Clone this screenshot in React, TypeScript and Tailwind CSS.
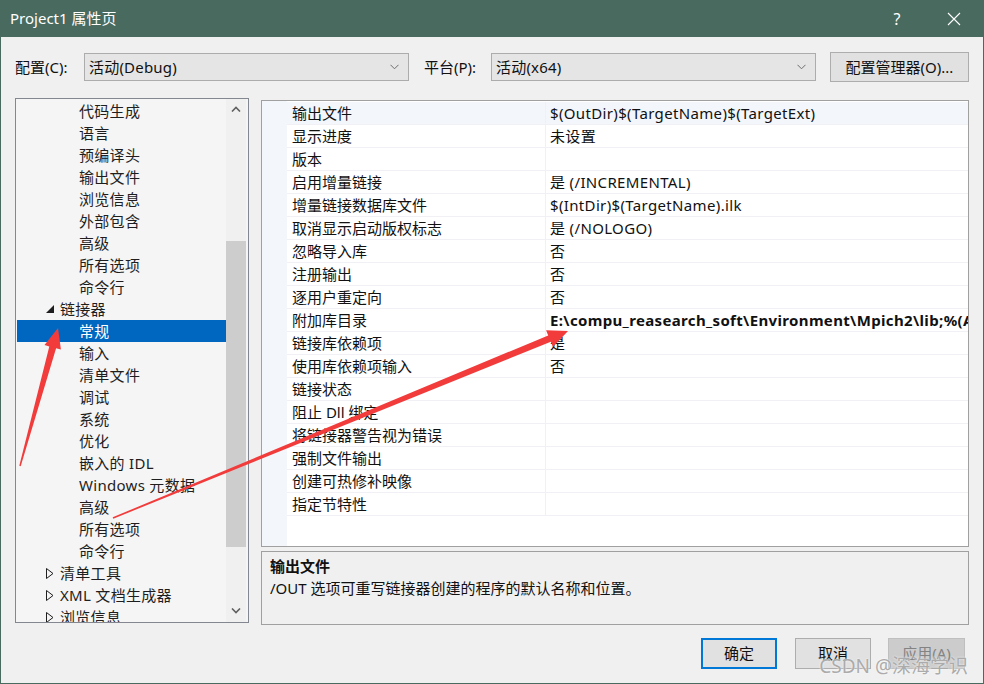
import React from "react";

const FONT = "font-['Noto_Sans','Noto_Sans_CJK_SC',sans-serif]";

type TreeItem = { label: string; level: 0 | 1; state?: "open" | "closed"; selected?: boolean };

const tree: TreeItem[] = [
  { label: "代码生成", level: 1 },
  { label: "语言", level: 1 },
  { label: "预编译头", level: 1 },
  { label: "输出文件", level: 1 },
  { label: "浏览信息", level: 1 },
  { label: "外部包含", level: 1 },
  { label: "高级", level: 1 },
  { label: "所有选项", level: 1 },
  { label: "命令行", level: 1 },
  { label: "链接器", level: 0, state: "open" },
  { label: "常规", level: 1, selected: true },
  { label: "输入", level: 1 },
  { label: "清单文件", level: 1 },
  { label: "调试", level: 1 },
  { label: "系统", level: 1 },
  { label: "优化", level: 1 },
  { label: "嵌入的 IDL", level: 1 },
  { label: "Windows 元数据", level: 1 },
  { label: "高级", level: 1 },
  { label: "所有选项", level: 1 },
  { label: "命令行", level: 1 },
  { label: "清单工具", level: 0, state: "closed" },
  { label: "XML 文档生成器", level: 0, state: "closed" },
  { label: "浏览信息", level: 0, state: "closed" },
];

const props: [string, string, boolean?][] = [
  ["输出文件", "$(OutDir)$(TargetName)$(TargetExt)"],
  ["显示进度", "未设置"],
  ["版本", ""],
  ["启用增量链接", "是 (/INCREMENTAL)"],
  ["增量链接数据库文件", "$(IntDir)$(TargetName).ilk"],
  ["取消显示启动版权标志", "是 (/NOLOGO)"],
  ["忽略导入库", "否"],
  ["注册输出", "否"],
  ["逐用户重定向", "否"],
  ["附加库目录", "E:\\compu_reasearch_soft\\Environment\\Mpich2\\lib;%(AdditionalLibraryDirectories)", true],
  ["链接库依赖项", "是"],
  ["使用库依赖项输入", "否"],
  ["链接状态", ""],
  ["阻止 Dll 绑定", ""],
  ["将链接器警告视为错误", ""],
  ["强制文件输出", ""],
  ["创建可热修补映像", ""],
  ["指定节特性", ""],
];

function arrowPts(
  tx: number, ty: number, px: number, py: number,
  tw: number, sw: number, hl: number, hw: number
) {
  const dx = px - tx, dy = py - ty;
  const len = Math.hypot(dx, dy);
  const ux = dx / len, uy = dy / len;
  const nx = -uy, ny = ux;
  const bx = px - ux * hl, by = py - uy * hl;
  const pts = [
    [tx + (nx * tw) / 2, ty + (ny * tw) / 2],
    [bx + (nx * sw) / 2, by + (ny * sw) / 2],
    [bx + nx * hw, by + ny * hw],
    [px, py],
    [bx - nx * hw, by - ny * hw],
    [bx - (nx * sw) / 2, by - (ny * sw) / 2],
    [tx - (nx * tw) / 2, ty - (ny * tw) / 2],
  ];
  return pts.map((p) => `${p[0].toFixed(1)},${p[1].toFixed(1)}`).join(" ");
}

function Chevron() {
  return (
    <svg width="9" height="6" viewBox="0 0 9 6">
      <path d="M0.5 0.8 L4.5 4.8 L8.5 0.8" fill="none" stroke="#6d6d6d" strokeWidth="1" />
    </svg>
  );
}

function Combo({ text }: { text: string }) {
  return (
    <div className="w-[325px] h-[28px] bg-[#e5e5e5] border border-[#acacac] flex items-center pl-[4px] pr-[9px]">
      <span className="flex-1 text-[15px] text-[#111] tracking-[0.2px]">{text}</span>
      <Chevron />
    </div>
  );
}

export default function App() {
  return (
    <div className={`relative w-[984px] h-[684px] bg-[#f0f0f0] border-x border-b border-[#496a5f] flex flex-col overflow-hidden ${FONT}`}>
      {/* Title bar */}
      <div className="h-[37px] bg-[#496a5f] flex items-center pl-[9px] text-white">
        <span className="text-[15px] flex-1">Project1 属性页</span>
        <span className="text-[16px] w-[20px] text-center mr-[40px]">?</span>
        <svg width="14" height="14" viewBox="0 0 14 14" className="mr-[22px]">
          <path d="M1 1 L13 13 M13 1 L1 13" stroke="white" strokeWidth="1.1" />
        </svg>
      </div>

      {/* Config row */}
      <div className="mt-[15px] h-[30px] flex items-center pl-[14px] text-[15px] text-[#111]">
        <span className="w-[69px]">配置(C):</span>
        <Combo text="活动(Debug)" />
        <span className="w-[67px] ml-[15px]">平台(P):</span>
        <Combo text="活动(x64)" />
        <div className="ml-[14px] w-[139px] h-[30px] bg-[#e1e1e1] border border-[#adadad] flex items-center justify-center">
          配置管理器(O)...
        </div>
      </div>

      {/* Main area */}
      <div className="mt-[16px] flex pl-[14px]">
        {/* Tree */}
        <div className="w-[234px] h-[525px] border border-[#828790] bg-[#f5f5f5] flex overflow-hidden">
          <div className="w-[210px] pt-[1px] pl-[1px] overflow-hidden">
            {tree.map((t, i) => (
              <div
                key={i}
                className={`h-[22px] flex items-center text-[15px] whitespace-nowrap ${
                  t.selected ? "bg-[#0067c0] text-white" : "text-[#1e1e1e]"
                }`}
              >
                {t.level === 0 ? (
                  <>
                    <span className="w-[43px] flex justify-end pr-[6px]">
                      {t.state === "open" ? (
                        <svg width="8" height="8" viewBox="0 0 8 8">
                          <polygon points="8,0 8,8 0,8" fill="#1e1e1e" />
                        </svg>
                      ) : (
                        <svg width="8" height="11" viewBox="0 0 8 11">
                          <polygon points="0.5,0.5 7,5.5 0.5,10.5" fill="none" stroke="#1e1e1e" strokeWidth="1" />
                        </svg>
                      )}
                    </span>
                    <span className="tracking-[0.3px]">{t.label}</span>
                  </>
                ) : (
                  <span className="pl-[62px] tracking-[0.3px]">{t.label}</span>
                )}
              </div>
            ))}
          </div>
          {/* Scrollbar */}
          <div className="w-[20px] bg-[#f0f0f0] flex flex-col">
            <div className="h-[20px] flex items-center justify-center">
              <svg width="10" height="6" viewBox="0 0 10 6">
                <path d="M1 5.5 L5 1.5 L9 5.5" fill="none" stroke="#606060" strokeWidth="1.6" />
              </svg>
            </div>
            <div className="flex-1 flex flex-col">
              <div className="mt-[122px] h-[306px] bg-[#cdcdcd]" />
            </div>
            <div className="h-[22px] flex items-center justify-center">
              <svg width="10" height="6" viewBox="0 0 10 6">
                <path d="M1 0.5 L5 4.5 L9 0.5" fill="none" stroke="#606060" strokeWidth="1.6" />
              </svg>
            </div>
          </div>
        </div>

        {/* Right column */}
        <div className="ml-[12px] w-[708px] pt-[2px] flex flex-col">
          <div className="h-[447px] border border-[#a0a0a0] bg-white flex overflow-hidden">
            <div className="w-[25px] bg-[#f3f6fb]" />
            <div className="flex-1 pt-[1px] overflow-hidden">
              {props.map(([n, v, b], i) => (
                <div
                  key={i}
                  className={`h-[23px] flex border-b border-[#f0f0f5] text-[15px] text-[#111] ${
                    i === 0 ? "bg-[#f3f6fb]" : ""
                  }`}
                >
                  <div className="w-[259px] pl-[5px] flex items-center whitespace-nowrap border-r border-[#f0f0f5]">
                    {n}
                  </div>
                  <div
                    className={`flex-1 pl-[4px] flex items-center whitespace-nowrap overflow-hidden tracking-[0.35px] ${
                      b ? "font-bold" : ""
                    }`}
                  >
                    {v}
                  </div>
                </div>
              ))}
            </div>
          </div>
          <div className="mt-[4px] h-[74px] border border-[#a0a0a0] bg-[#f0f0f0] px-[8px] pt-[3px] text-[#111]">
            <div className="text-[15px] font-bold leading-[22px]">输出文件</div>
            <div className="text-[15px] leading-[22px]">/OUT 选项可重写链接器创建的程序的默认名称和位置。</div>
          </div>
        </div>
      </div>

      {/* Bottom buttons */}
      <div className="mt-[13px] flex justify-end pr-[18px] text-[15px]">
        <div className="w-[76px] h-[31px] bg-[#e1e1e1] border-2 border-[#0078d7] flex items-center justify-center text-[#111]">
          确定
        </div>
        <div className="ml-[18px] w-[76px] h-[31px] bg-[#e1e1e1] border border-[#adadad] flex items-center justify-center text-[#111]">
          取消
        </div>
        <div className="ml-[17px] w-[77px] h-[31px] bg-[#cccccc] border border-[#bfbfbf] flex items-center justify-center text-[#838383]">
          应用(A)
        </div>
      </div>

      {/* Watermark */}
      <div className="absolute right-[15px] bottom-[4px] text-[19px] leading-[26px] text-[#ababab] [text-shadow:0_0_2px_#ffffff] pointer-events-none">
        CSDN @深海学识
      </div>

      {/* Red annotation arrows */}
      <svg className="absolute left-0 top-0 pointer-events-none" width="984" height="684" viewBox="0 0 984 684">
        <polygon points={arrowPts(19, 466, 57, 328, 1.5, 7, 20, 8.5)} fill="#f23b3b" />
        <polygon points={arrowPts(112, 518, 567, 331, 1.5, 7, 20, 9)} fill="#f23b3b" />
      </svg>
    </div>
  );
}
